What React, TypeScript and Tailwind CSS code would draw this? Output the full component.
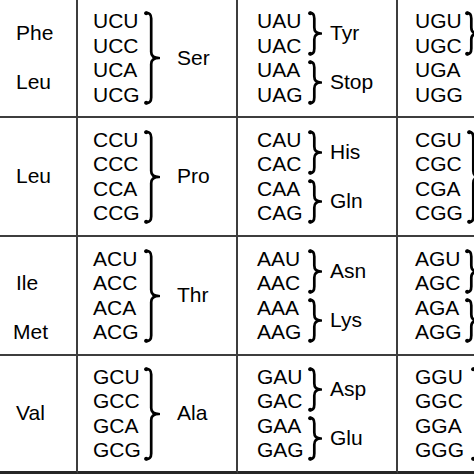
import React from "react";

type Group = [number, string];

type Cell = {
  codons: string[];
  groups: Group[];
};

type Row = {
  left: Group[];
  cells: [Cell, Cell, Cell];
};

const LINE = 24.5;

// the last column is cut off by the frame, its amino acids are not shown
const rows: Row[] = [
  {
    left: [
      [2, "Phe"],
      [2, "Leu"],
    ],
    cells: [
      { codons: ["UCU", "UCC", "UCA", "UCG"], groups: [[4, "Ser"]] },
      { codons: ["UAU", "UAC", "UAA", "UAG"], groups: [[2, "Tyr"], [2, "Stop"]] },
      { codons: ["UGU", "UGC", "UGA", "UGG"], groups: [[2, ""], [1, ""], [1, ""]] },
    ],
  },
  {
    left: [[4, "Leu"]],
    cells: [
      { codons: ["CCU", "CCC", "CCA", "CCG"], groups: [[4, "Pro"]] },
      { codons: ["CAU", "CAC", "CAA", "CAG"], groups: [[2, "His"], [2, "Gln"]] },
      { codons: ["CGU", "CGC", "CGA", "CGG"], groups: [[4, ""]] },
    ],
  },
  {
    left: [
      [3, "Ile"],
      [1, "Met"],
    ],
    cells: [
      { codons: ["ACU", "ACC", "ACA", "ACG"], groups: [[4, "Thr"]] },
      { codons: ["AAU", "AAC", "AAA", "AAG"], groups: [[2, "Asn"], [2, "Lys"]] },
      { codons: ["AGU", "AGC", "AGA", "AGG"], groups: [[2, ""], [2, ""]] },
    ],
  },
  {
    left: [[4, "Val"]],
    cells: [
      { codons: ["GCU", "GCC", "GCA", "GCG"], groups: [[4, "Ala"]] },
      { codons: ["GAU", "GAC", "GAA", "GAG"], groups: [[2, "Asp"], [2, "Glu"]] },
      { codons: ["GGU", "GGC", "GGA", "GGG"], groups: [[4, ""]] },
    ],
  },
];

// curly brace, drawn to the height of the codons it groups
const Brace = ({ h, w = 14 }: { h: number; w?: number }) => {
  const s = w * 0.45;
  const m = h / 2;
  const d = `M1.8 2 Q${s} 1.5 ${s} 7.5 L${s} ${m - 6} Q${s} ${m} ${w - 1} ${m} Q${s} ${m} ${s} ${m + 6} L${s} ${h - 7.5} Q${s} ${h - 1.5} 1.8 ${h - 2}`;
  return (
    <svg width={w} height={h} viewBox={`0 0 ${w} ${h}`} className="shrink-0">
      <path d={d} fill="none" stroke="#000" strokeWidth={2.7} strokeLinecap="round" strokeLinejoin="round" />
      <circle cx={2.2} cy={2.2} r={2} fill="#000" />
      <circle cx={2.2} cy={h - 2.2} r={2} fill="#000" />
    </svg>
  );
};

const CodonCell = ({
  cell,
  pad,
  codonW,
  braceW,
  bigBraceW,
  labelGap,
}: {
  cell: Cell;
  pad: string;
  codonW: string;
  braceW: number;
  bigBraceW?: string;
  labelGap: string;
}) => {
  let i = 0;
  return (
    <div className={`flex flex-col justify-center ${pad}`}>
      {cell.groups.map(([n, label], gi) => {
        const codons = cell.codons.slice(i, i + n);
        i += n;
        return (
          <div key={gi} className="flex items-center">
            <div className={`flex flex-col ${n === 4 && bigBraceW ? bigBraceW : codonW}`}>
              {codons.map((c) => (
                <span key={c}>{c}</span>
              ))}
            </div>
            {n > 1 && <Brace h={n * LINE - 4} w={braceW} />}
            {label && <span className={`${labelGap} whitespace-nowrap`}>{label}</span>}
          </div>
        );
      })}
    </div>
  );
};

export default function App() {
  return (
    <div
      className="w-[474px] h-[474px] overflow-hidden bg-white text-[21px] leading-[24.5px] text-black"
      style={{ fontFamily: '"Liberation Sans", Arial, sans-serif' }}
    >
      <div className="grid grid-cols-[78px_160px_160px_76px] grid-rows-[118px_119px_119px_118px]">
        {rows.map((row, ri) => {
          const last = ri === rows.length - 1;
          const bottom = last ? "border-b-[3px] border-b-[#262626]" : "border-b-2 border-b-[#3d3d3d]";
          return (
            <React.Fragment key={ri}>
              {/* amino acids of the column cut off on the left */}
              <div className={`flex flex-col justify-center pl-[16px] border-r-2 border-r-[#3d3d3d] ${bottom}`}>
                {row.left.map(([n, label]) => (
                  <div key={label} className="flex items-center" style={{ height: n * LINE }}>
                    <span className={label === "Met" ? "-ml-[3px]" : ""}>{label}</span>
                  </div>
                ))}
              </div>
              <div className={`flex border-r-2 border-r-[#3d3d3d] ${bottom}`}>
                <CodonCell cell={row.cells[0]} pad="pl-[15px]" codonW="w-[51px]" braceW={16} labelGap="ml-[17px]" />
              </div>
              <div className={`flex border-r-2 border-r-[#3d3d3d] ${bottom}`}>
                <CodonCell cell={row.cells[1]} pad="pl-[19px]" codonW="w-[51px]" braceW={14} labelGap="ml-[8px]" />
              </div>
              <div className={`flex overflow-hidden ${bottom}`}>
                <CodonCell
                  cell={row.cells[2]}
                  pad="pl-[17px]"
                  codonW="w-[50px]"
                  bigBraceW={ri === 3 ? "w-[56px]" : "w-[52px]"}
                  braceW={14}
                  labelGap="ml-[8px]"
                />
              </div>
            </React.Fragment>
          );
        })}
      </div>
    </div>
  );
}
